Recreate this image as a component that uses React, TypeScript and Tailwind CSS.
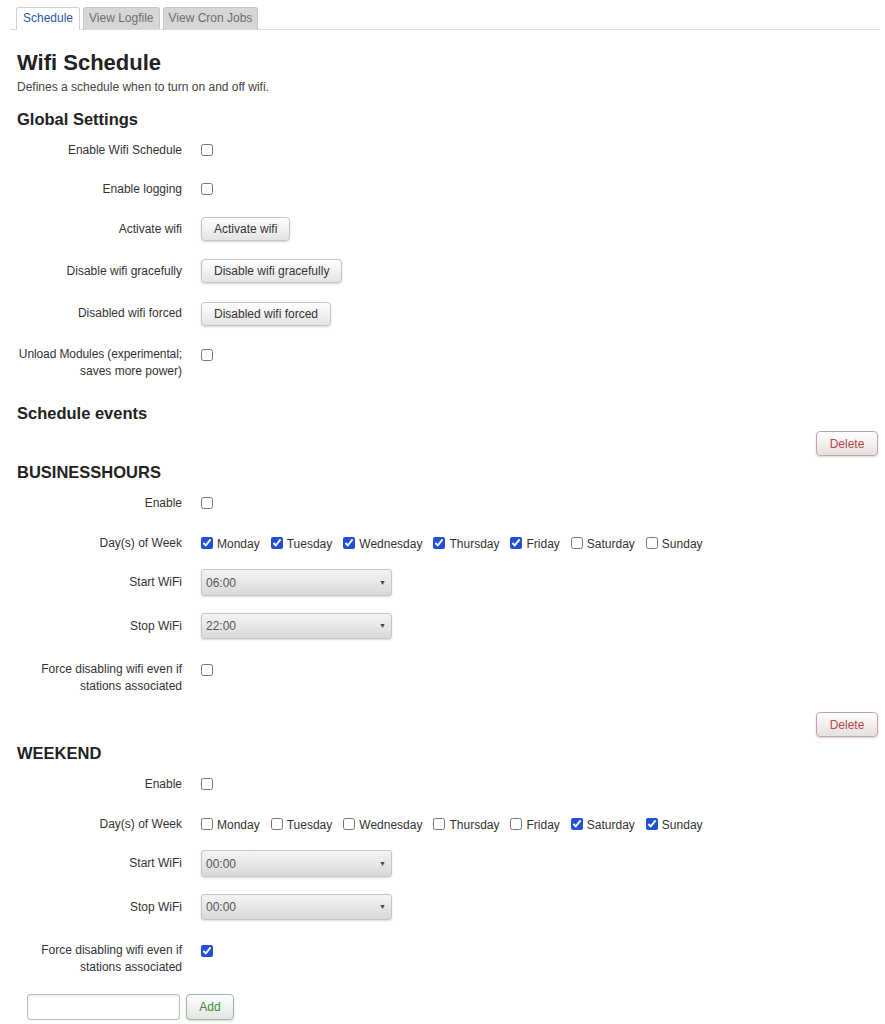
import React from 'react';

const DAYS = ['Monday', 'Tuesday', 'Wednesday', 'Thursday', 'Friday', 'Saturday', 'Sunday'];

const Check = ({ on }: { on?: boolean }) => (
  <input
    type="checkbox"
    defaultChecked={on}
    className="m-0 h-[12px] w-[12px] accent-[#2150d4] shrink-0"
  />
);

const Row = ({
  label,
  className,
  children,
  multi,
}: {
  label: React.ReactNode;
  className?: string;
  children: React.ReactNode;
  multi?: boolean;
}) => (
  <div className={`flex ${multi ? 'items-start' : 'items-center'} ${className ?? ''}`}>
    <div className="w-[165px] shrink-0 whitespace-nowrap text-right text-[12px] leading-[17px] text-[#333]">{label}</div>
    <div className={`ml-[19px] flex items-center ${multi ? 'h-[17px]' : ''}`}>{children}</div>
  </div>
);

const Btn = ({ children }: { children: React.ReactNode }) => (
  <button className="h-[24px] rounded-[4px] border border-[#c4c4c4] bg-linear-to-b from-white to-[#e4e4e4] px-[12px] text-[12px] text-[#333] shadow-[0_1px_2px_rgba(0,0,0,0.18)]">
    {children}
  </button>
);

const TimeSelect = ({ value, className }: { value: string; className?: string }) => (
  <div className={`relative w-[191px] ${className ?? 'h-[27px]'}`}>
    <select
      defaultValue={value}
      className="h-full w-full appearance-none rounded-[3px] border border-[#c6c6c6] bg-linear-to-b from-[#f4f4f4] to-[#d9d9d9] pl-[4px] text-[12px] text-[#555] shadow-[0_1px_2px_rgba(0,0,0,0.15)] outline-none"
    >
      <option>{value}</option>
    </select>
    <span className="pointer-events-none absolute right-[6px] top-1/2 -translate-y-1/2 text-[7px] text-[#444]">▼</span>
  </div>
);

const DeleteBtn = ({ className }: { className?: string }) => (
  <div className={`flex justify-end pr-[2px] ${className ?? ''}`}>
    <button className="h-[25px] w-[62px] rounded-[4px] border border-[#c9a3a3] bg-linear-to-b from-white to-[#e6e0e0] text-[12px] text-[#b04a4a] shadow-[0_1px_2px_rgba(0,0,0,0.18)]">
      Delete
    </button>
  </div>
);

const Section = ({
  name,
  days,
  start,
  stop,
  force,
}: {
  name: string;
  days: boolean[];
  start: string;
  stop: string;
  force: boolean;
}) => (
  <>
    <h3 className="mt-[6px] pl-[7px] text-[16.5px] font-bold leading-[20px] text-[#222]">{name}</h3>
    <div className="pl-[7px]">
      <Row label="Enable" className="mt-[11px] h-[20px]">
        <Check />
      </Row>
      <Row label="Day(s) of Week" className="mt-[20px] h-[20px]">
        <div className="flex items-center">
          {DAYS.map((d, i) => (
            <label key={d} className="mr-[11px] flex items-center">
              <Check on={days[i]} />
              <span className="ml-[4px] pt-[2px] text-[12px] text-[#333]">{d}</span>
            </label>
          ))}
        </div>
      </Row>
      <Row label="Start WiFi" className="mt-[16px]">
        <TimeSelect value={start} />
      </Row>
      <Row label="Stop WiFi" className="mt-[17px]">
        <TimeSelect value={stop} className="h-[26px]" />
      </Row>
      <Row
        multi
        className="mt-[22px]"
        label={
          <>
            Force disabling wifi even if
            <br />
            stations associated
          </>
        }
      >
        <Check on={force} />
      </Row>
    </div>
  </>
);

export default function App() {
  return (
    <div className="min-h-screen bg-white pl-[10px] pr-[5px] pt-[7px] font-['Liberation_Sans',Arial,sans-serif] text-[#333]">
      <ul className="flex items-end border-b border-[#dcdcdc] pl-[6px]">
        <li className="-mb-px h-[23px] rounded-t-[3px] border border-b-0 border-[#d0d0d0] bg-white px-[6px] text-[12px] leading-[21px] text-[#2c58a8]">
          Schedule
        </li>
        <li className="ml-[3px] h-[22px] rounded-t-[3px] border border-b-0 border-[#c6c6c6] bg-[#d6d6d6] px-[5px] text-[12px] leading-[21px] text-[#6e6e6e]">
          View Logfile
        </li>
        <li className="ml-[3px] h-[22px] rounded-t-[3px] border border-b-0 border-[#c6c6c6] bg-[#d6d6d6] px-[5px] text-[12px] leading-[21px] text-[#6e6e6e]">
          View Cron Jobs
        </li>
      </ul>

      <div className="pl-[7px]">
        <h2 className="mt-[20px] text-[22px] font-bold leading-[26px] text-[#222]">Wifi Schedule</h2>
        <p className="mt-[4px] text-[12px] leading-[15px] text-[#444]">Defines a schedule when to turn on and off wifi.</p>
        <h3 className="mt-[14px] text-[16.5px] font-bold leading-[20px] text-[#222]">Global Settings</h3>

        <Row label="Enable Wifi Schedule" className="mt-[11px] h-[20px]">
          <Check />
        </Row>
        <Row label="Enable logging" className="mt-[19px] h-[20px]">
          <Check />
        </Row>
        <Row label="Activate wifi" className="mt-[18px] h-[24px]">
          <Btn>Activate wifi</Btn>
        </Row>
        <Row label="Disable wifi gracefully" className="mt-[18px] h-[24px]">
          <Btn>Disable wifi gracefully</Btn>
        </Row>
        <Row label="Disabled wifi forced" className="mt-[18px] h-[25px]">
          <Btn>Disabled wifi forced</Btn>
        </Row>
        <Row
          multi
          className="mt-[20px]"
          label={
            <>
              <span className="tracking-[-0.1px]">Unload Modules (experimental;</span>
              <br />
              saves more power)
            </>
          }
        >
          <Check />
        </Row>

        <h3 className="mt-[23px] text-[16.5px] font-bold leading-[20px] text-[#222]">Schedule events</h3>
      </div>

      <DeleteBtn className="mt-[8px]" />
      <Section
        name="BUSINESSHOURS"
        days={[true, true, true, true, true, false, false]}
        start="06:00"
        stop="22:00"
        force={false}
      />

      <DeleteBtn className="mt-[17px]" />
      <Section
        name="WEEKEND"
        days={[false, false, false, false, false, true, true]}
        start="00:00"
        stop="00:00"
        force={true}
      />

      <div className="mt-[18px] flex items-center pb-[5px] pl-[17px]">
        <input
          type="text"
          className="h-[26px] w-[153px] rounded-[3px] border border-[#bdbdbd] px-[4px] text-[12px] shadow-[inset_0_1px_2px_rgba(0,0,0,0.1)] outline-none"
        />
        <button className="ml-[6px] h-[26px] w-[48px] rounded-[4px] border border-[#9fb89f] bg-linear-to-b from-white to-[#e2e6e2] text-[12px] text-[#3d8a3d] shadow-[0_1px_2px_rgba(0,0,0,0.18)]">
          Add
        </button>
      </div>
    </div>
  );
}
